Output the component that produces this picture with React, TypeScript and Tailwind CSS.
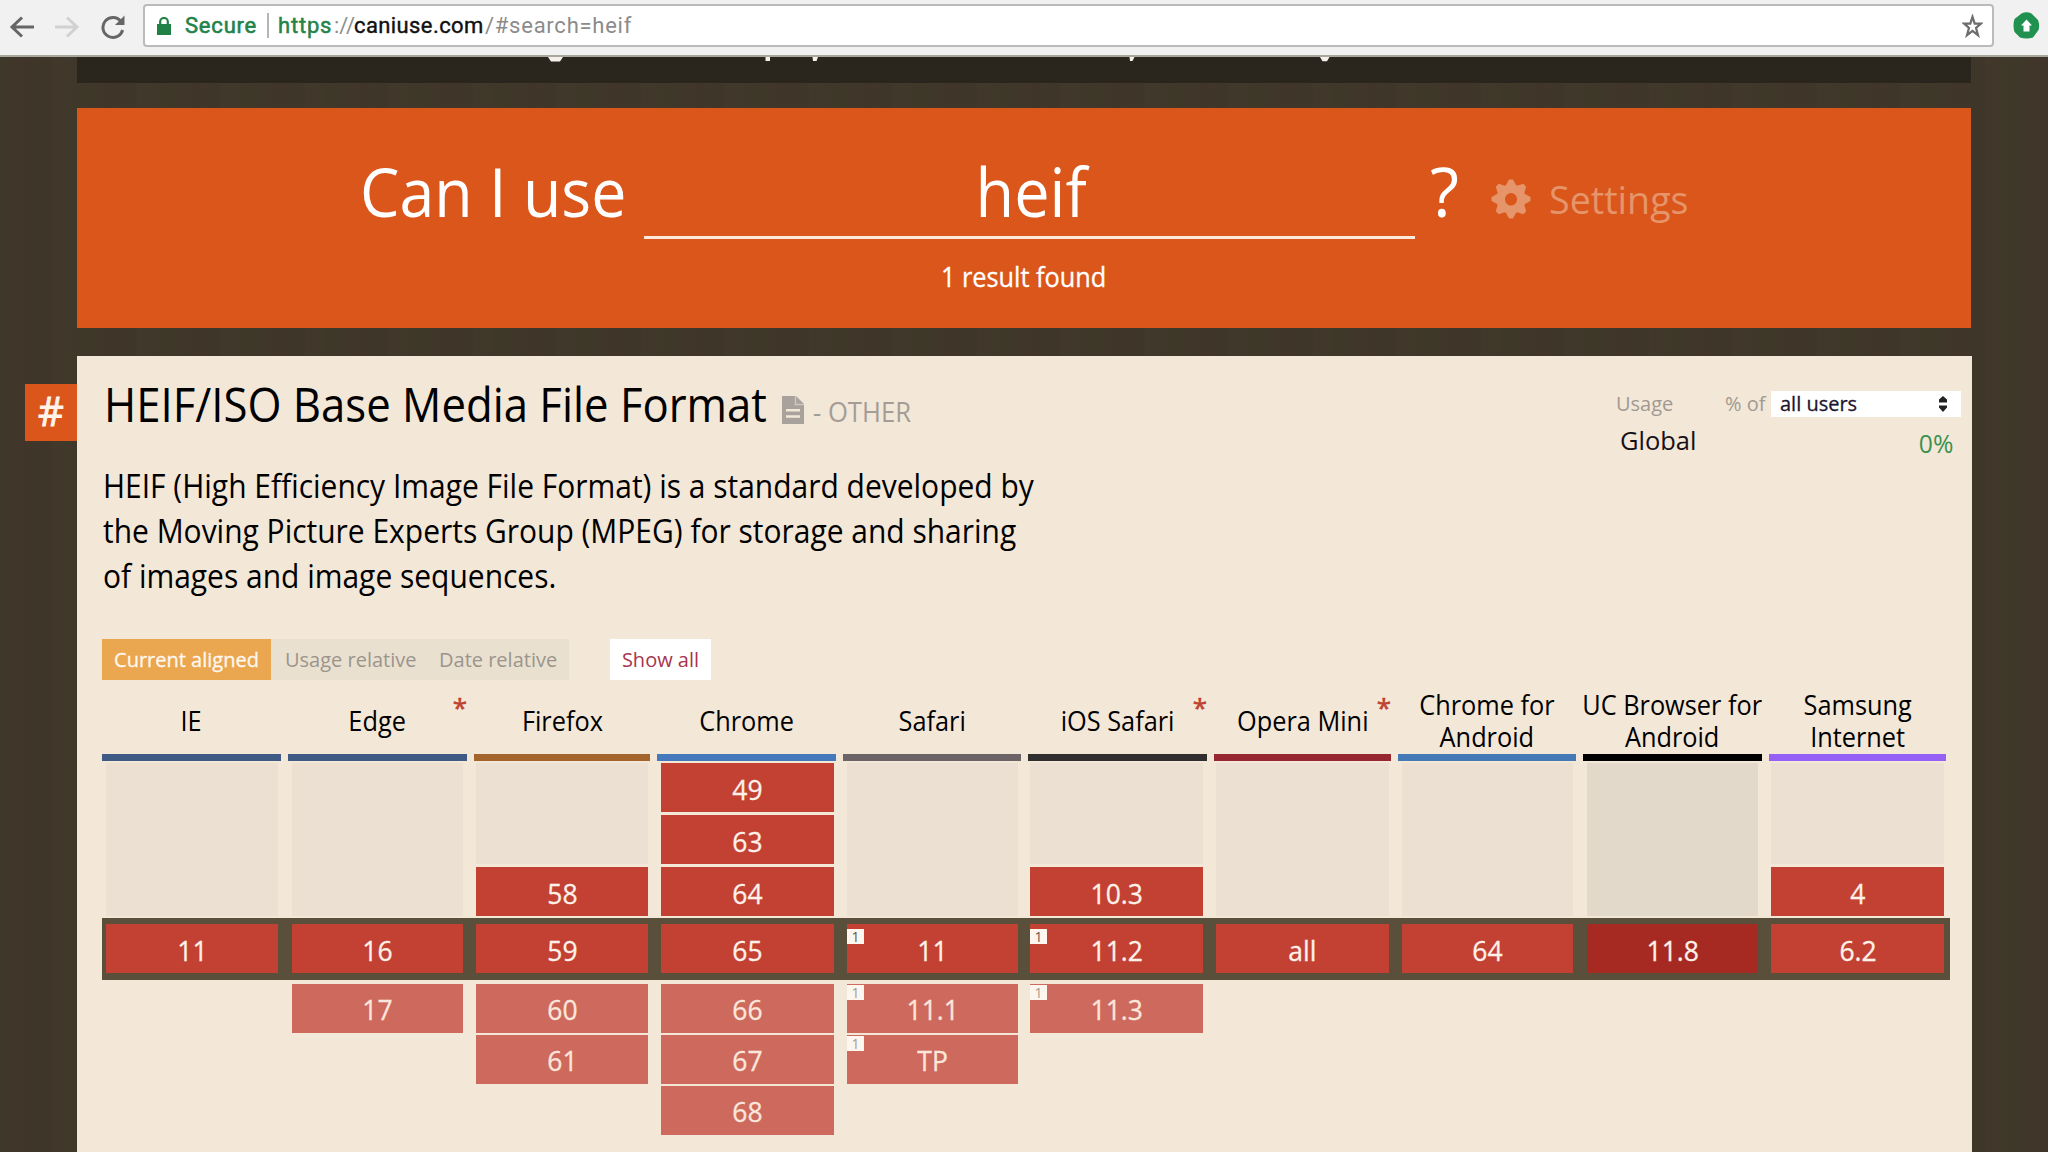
import type { ReactNode } from 'react';

type Cell = { label: string; note?: boolean; tone?: string };

type Browser = {
  name: ReactNode;
  star?: boolean;
  bar: string;
  box: string;
  empty?: string;
  past: Cell[];
  current: Cell;
  future: Cell[];
};

const browsers: Browser[] = [
  { name: 'IE', bar: 'bg-[#3f5a85]', box: 'ml-1 w-[172px]', past: [], current: { label: '11' }, future: [] },
  { name: 'Edge', star: true, bar: 'bg-[#3f5a85]', box: 'ml-1 w-[171px]', past: [], current: { label: '16' }, future: [{ label: '17' }] },
  { name: 'Firefox', bar: 'bg-[#a4652c]', box: 'ml-0.5 w-[172px]', past: [{ label: '58' }], current: { label: '59' }, future: [{ label: '60' }, { label: '61' }] },
  {
    name: 'Chrome',
    bar: 'bg-[#4579bb]',
    box: 'ml-1 w-[173px]',
    past: [{ label: '49' }, { label: '63' }, { label: '64' }],
    current: { label: '65' },
    future: [{ label: '66' }, { label: '67' }, { label: '68' }],
  },
  { name: 'Safari', bar: 'bg-[#6b6366]', box: 'ml-1 w-[171px]', past: [], current: { label: '11', note: true }, future: [{ label: '11.1', note: true }, { label: 'TP', note: true }] },
  { name: 'iOS Safari', star: true, bar: 'bg-[#302e2e]', box: 'ml-0.5 w-[173px]', past: [{ label: '10.3' }], current: { label: '11.2', note: true }, future: [{ label: '11.3', note: true }] },
  { name: 'Opera Mini', star: true, bar: 'bg-[#962731]', box: 'ml-0.5 w-[173px]', past: [], current: { label: 'all' }, future: [] },
  { name: <>Chrome for<br />Android</>, bar: 'bg-[#4579b5]', box: 'ml-1 w-[171px]', past: [], current: { label: '64' }, future: [] },
  { name: <>UC Browser for<br />Android</>, bar: 'bg-black', box: 'ml-1 w-[171px]', empty: 'bg-[#e3d9cb]', past: [], current: { label: '11.8', tone: 'bg-[#a62a21]' }, future: [] },
  { name: <>Samsung<br />Internet</>, bar: 'bg-[#9560f5]', box: 'ml-0.5 w-[173px]', past: [{ label: '4' }], current: { label: '6.2' }, future: [] },
];

const columns = 'grid grid-cols-[186px_186px_183px_186px_185px_186px_184px_185px_186px_184px]';

function VersionCell({ cell, future = false }: { cell: Cell; future?: boolean }) {
  const tone = cell.tone ?? (future ? 'bg-[#cd6a5d]' : 'bg-[#c24133]');
  const text = future
    ? 'pt-[1px] text-[#fbe6dc] [-webkit-text-stroke:0.3px_#fbe6dc]'
    : 'pt-[3px] text-[#fdf1e9] [-webkit-text-stroke:0.3px_#fdf1e9]';
  return (
    <div className={`relative flex h-[49px] shrink-0 items-center justify-center text-[27px] leading-none ${tone} ${text}`}>
      <span className="inline-block scale-x-[0.98]">{cell.label}</span>
      {cell.note && (
        <span
          className={`absolute left-0 flex h-[15px] w-[17px] items-center justify-center bg-[#fdf6ee] text-[14px] leading-none [-webkit-text-stroke:0px] ${
            future ? 'top-[1px] text-[#a39c92]' : 'top-[5px] text-[#5f5a52]'
          }`}
        >
          1
        </span>
      )}
    </div>
  );
}

function Toolbar() {
  return (
    <header className="flex h-[57px] shrink-0 items-start border-b-2 border-[#aaa79f] bg-[#f2f1f1] font-[Roboto,sans-serif]">
      <div className="flex h-[52px] w-[143px] shrink-0 items-center pl-[8px] pt-[2px]">
        <svg width="28" height="24" viewBox="0 0 28 24" fill="none" stroke="#666" strokeWidth="3">
          <path d="M26 12H4M14 2.5L4 12l10 9.5" />
        </svg>
        <svg className="ml-[17px]" width="28" height="24" viewBox="0 0 28 24" fill="none" stroke="#d2d1d1" strokeWidth="3">
          <path d="M2 12h22M14 2.5L24 12l-10 9.5" />
        </svg>
        <svg className="ml-[19px]" width="26" height="26" viewBox="0 0 26 26" fill="none" stroke="#666" strokeWidth="3">
          <path d="M21 7.5A10 10 0 1 0 22.6 16" />
          <path d="M24.500 1.500v9.500h-9.500z" fill="#666" stroke="none" />
        </svg>
      </div>
      <div className="mt-1 flex h-[43px] w-[1851px] items-center rounded-[4px] border-2 border-[#bcbaba] bg-white text-[22px] leading-[42px]">
        <svg className="ml-[12px]" width="14" height="18" viewBox="0 0 14 18">
          <path d="M0 7h14v11H0z" fill="#1f8145" />
          <path d="M3.200 8V4.500a3.800 3.500 0 0 1 7.600 0V8" fill="none" stroke="#1f8145" strokeWidth="2.200" />
        </svg>
        <span className="ml-[14px] w-[82px] text-[#23834a] tracking-[0.8px] [-webkit-text-stroke:0.6px_#23834a]">Secure</span>
        <span className="h-[25px] w-[2px] bg-[#b5b5b5]" />
        <span className="ml-[9px] w-[56px] text-[#23834a] tracking-[0.8px] [-webkit-text-stroke:0.5px_#23834a]">https</span>
        <span className="w-[20px] text-[#8a8f8a]">://</span>
        <span className="w-[131px] text-[#111] tracking-[0.4px] [-webkit-text-stroke:0.4px_#111]">caniuse.com</span>
        <span className="text-[#8b8b8b] tracking-[0.75px]">/#search=heif</span>
        <svg className="ml-auto mr-[9px]" width="21" height="24" viewBox="0 0 21 24" fill="none" stroke="#6d6d6d" strokeWidth="2.200">
          <path d="M10.500 2.800l2.200 6.800h6.300l-5 4.200 2 7.400-5.500-4.400-5.500 4.400 2-7.400-5-4.200h6.300z" />
        </svg>
      </div>
      <svg className="ml-[19px] mt-[12px]" width="27" height="27" viewBox="0 0 27 27">
        <path d="M8.500 1.500Q13.500-1 18.500 1.500L25 8q2 5 .5 10L20 25.500q-6.500 2-13 0L1.500 20q-2-6.500 0-13z" fill="#21914f" />
        <path d="M13.500 7.500l5.500 6h-2.500v6h-6v-6H8z" fill="#fff" />
      </svg>
    </header>
  );
}

function CutOffBanner() {
  return (
    <div className="mx-[77px] h-[26px] w-[1894px] shrink-0 bg-[#2a261e]">
      <svg width="1894" height="6" viewBox="77 0 1894 6" fill="#f4f1ea">
        <path d="M548 0h15l-3 4.500h-9z" />
        <path d="M765.500 0h4.500v4h-4.500z" />
        <path d="M812.500 0h5.500l-1.500 4h-3.500z" />
        <path d="M1129.500 0h5l-2 4h-2.500z" />
        <path d="M1320 0h9.500l-2.500 4.200h-4.500z" />
      </svg>
    </div>
  );
}

function Gear() {
  return (
    <svg className="shrink-0" width="40" height="40" viewBox="-20 -20 40 40" fill="#e6946a">
      <path
        fillRule="evenodd"
        d="M0-14.500a14.500 14.500 0 1 0 0 29a14.500 14.500 0 1 0 0-29zM0-6a6 6.300 0 1 1 0 12.600a6 6.300 0 1 1 0-12.600z"
      />
      {[0, 45, 90, 135, 180, 225, 270, 315].map((angle) => (
        <path key={angle} d="M-5.500-13L-2-19.500h4L5.500-13z" transform={`rotate(${angle})`} />
      ))}
    </svg>
  );
}

function SearchHero() {
  return (
    <section className="mx-[77px] mt-[25px] h-[220px] w-[1894px] shrink-0 bg-[#da561b] pt-[35px] text-white">
      <div className="flex h-[96px] whitespace-nowrap pl-[282px] text-[67px] leading-[96px]">
        <div className="w-[285px] pl-[1px]">
          <span className="inline-block origin-left scale-x-[0.936]">Can I use</span>
        </div>
        <div className="flex w-[771px] justify-center border-b-[3px] border-[#fde9dc] pl-[3px]">
          <span className="inline-block scale-x-[0.94]">heif</span>
        </div>
        <div className="w-[76px] pl-[15px]">
          <span className="inline-block">?</span>
        </div>
        <div className="flex items-center pt-[15px] text-[39px] leading-none text-[#e6946a]">
          <Gear />
          <span className="ml-[18px] inline-block origin-left scale-x-[0.965]">Settings</span>
        </div>
      </div>
      <p className="mt-[18px] text-center text-[26.5px] leading-[40px]">
        <span className="inline-block scale-x-[0.955] [-webkit-text-stroke:0.3px_#fff]">1 result found</span>
      </p>
    </section>
  );
}

function UsagePanel() {
  return (
    <div className="absolute right-[11px] top-[34px] w-[345px]">
      <div className="flex h-[26px] items-center whitespace-nowrap pt-px text-[20px] leading-[26px] text-[#a09a92]">
        <span className="w-[109px]">Usage</span>
        <span className="w-[46px]">% of</span>
        <div className="flex h-[26px] flex-1 items-center justify-between bg-white pl-[9px] pr-[14px] text-[#1c1530]">
          <span className="[-webkit-text-stroke:0.3px_#1c1530]">all users</span>
          <svg width="8" height="16" viewBox="0 0 8 16" fill="#222">
            <path d="M0 6.500V3.500L4 0l4 3.500v3zM0 9.500h8v2L4 16l-4-4.500z" />
          </svg>
        </div>
      </div>
      <div className="mt-[4px] flex justify-between pl-[4px] pr-[8px] text-[26px] leading-[40px]">
        <span className="inline-block origin-left scale-x-[0.98] text-[#171117]">Global</span>
        <span className="inline-block origin-right scale-x-[0.95] pt-[3px] text-[#3b9150]">0%</span>
      </div>
    </div>
  );
}

function FeatureCard() {
  return (
    <section className="relative h-[800px] w-[1895px] bg-[#f3e7d8] pl-[25px] text-black">
      <UsagePanel />
      <div className="flex items-baseline whitespace-nowrap pt-[18px] text-[47px] leading-[60px]">
        <h1 className="w-[680px] pl-[2px]">
          <span className="inline-block origin-left scale-x-[0.93]">HEIF/ISO Base Media File Format</span>
        </h1>
        <svg className="translate-y-[2px]" width="22" height="28" viewBox="0 0 22 28">
          <path d="M0 0h14l8 8v20H0z" fill="#a9a29c" />
          <path d="M4 14.300h14M4 20.500h14" stroke="#f3e7d8" strokeWidth="2.400" />
          <path d="M13.500 0v8.500H22" fill="none" stroke="#cfc6bc" strokeWidth="1.500" />
        </svg>
        <span className="ml-[9px] inline-block origin-left scale-x-[0.95] text-[27px] text-[#a39d96]">- OTHER</span>
      </div>
      <p className="mt-[21px] whitespace-nowrap pl-[1px] text-[32.5px] leading-[45px]">
        <span className="inline-block origin-left scale-x-[0.922]">
          HEIF (High Efficiency Image File Format) is a standard developed by
          <br />
          the Moving Picture Experts Group (MPEG) for storage and sharing
          <br />
          of images and image sequences.
        </span>
      </p>
      <div className="mt-[41px] flex h-[41px] whitespace-nowrap text-[20px] leading-[41px]">
        <span className="w-[169px] bg-[#eba650] text-center text-[#fff8ee] [-webkit-text-stroke:0.3px_#fff8ee]">Current aligned</span>
        <span className="w-[156px] bg-[#eae0d0] pl-[14px] text-[#9a958c]">Usage relative</span>
        <span className="w-[142px] bg-[#eae0d0] pl-[12px] text-[#9a958c]">Date relative</span>
        <span className="ml-[41px] w-[101px] bg-white text-center text-[#a8344d]">Show all</span>
      </div>
      <div className={`${columns} mt-[7px]`}>
        {browsers.map((b, i) => (
          <div key={i} className="relative mr-[7px]">
            <div className="flex h-[67px] items-center justify-center whitespace-nowrap text-center text-[26.5px] leading-[32px]">
              <span className="inline-block scale-x-[0.955]">{b.name}</span>
            </div>
            <div className={`h-[7px] ${b.bar}`} />
            {b.star && (
              <span className="absolute right-0 top-0 text-[26px] leading-[40px] text-[#c0412f] [-webkit-text-stroke:0.6px_#c0412f]">*</span>
            )}
          </div>
        ))}
      </div>
      <div className={`${columns} mt-[2px] h-[153px]`}>
        {browsers.map((b, i) => (
          <div key={i} className={`flex h-[153px] flex-col gap-[3px] ${b.box}`}>
            {b.past.length < 3 && <div className={`flex-1 ${b.empty ?? 'bg-[#ebe0d1]'}`} />}
            {b.past.map((c) => (
              <VersionCell key={c.label} cell={c} />
            ))}
          </div>
        ))}
      </div>
      <div className={`${columns} mt-[2px] h-[62px] w-[1848px] bg-[#594f3b] pt-[6px]`}>
        {browsers.map((b, i) => (
          <div key={i} className={b.box}>
            <VersionCell cell={b.current} />
          </div>
        ))}
      </div>
      <div className={`${columns} mt-[4px]`}>
        {browsers.map((b, i) => (
          <div key={i} className={`flex flex-col gap-[2px] ${b.box}`}>
            {b.future.map((c) => (
              <VersionCell key={c.label} cell={c} future />
            ))}
          </div>
        ))}
      </div>
    </section>
  );
}

export default function App() {
  return (
    <div className="flex h-[1152px] w-[2048px] flex-col overflow-hidden bg-[#3f362a] bg-[repeating-linear-gradient(90deg,rgba(60,64,40,0.25)_0px,rgba(70,50,42,0.25)_26px,rgba(60,56,40,0.3)_52px,rgba(74,60,44,0.25)_53px,rgba(60,64,40,0.25)_84px)] font-['Open_Sans',sans-serif]">
      <Toolbar />
      <CutOffBanner />
      <SearchHero />
      <div className="mt-[28px] flex shrink-0 pl-[25px]">
        <span className="mt-[28px] flex h-[57px] w-[52px] items-center justify-center bg-[#da561b] pb-[4px] text-[40px] leading-none text-[#fff3ea] [-webkit-text-stroke:1px_#fff3ea]">
          #
        </span>
        <FeatureCard />
      </div>
    </div>
  );
}
